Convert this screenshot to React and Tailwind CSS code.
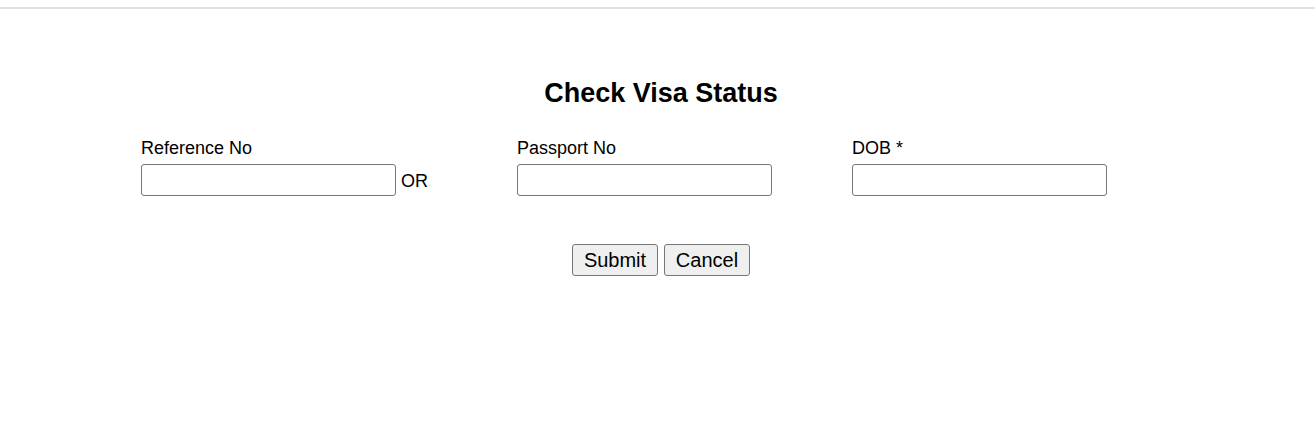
import React from "react";

export default function App() {
  const font = { fontFamily: '"Liberation Sans", Arial, sans-serif' };
  return (
    <div className="w-[1315px] h-[423px] bg-white text-black" style={font}>
      <div className="pt-[7px]">
        <div className="h-[2px] bg-[#e1e1e1]" />
      </div>
      <h2 className="mt-[69px] pl-[7px] text-center text-[27px] leading-[31px] font-bold">
        Check Visa Status
      </h2>
      <div className="mt-[29px] flex pl-[141px]">
        <div className="w-[376px] flex flex-col">
          <label className="text-[18px] leading-[20px]">Reference No</label>
          <div className="mt-[6px] flex items-center gap-[5px]">
            <input
              type="text"
              className="w-[255px] h-[32px] border border-[#767676] rounded-[3px] bg-white px-1 outline-none"
            />
            <span className="text-[18px] leading-[20px] pt-[2px]">OR</span>
          </div>
        </div>
        <div className="w-[335px] flex flex-col">
          <label className="text-[18px] leading-[20px]">Passport No</label>
          <div className="mt-[6px]">
            <input
              type="text"
              className="w-[255px] h-[32px] border border-[#767676] rounded-[3px] bg-white px-1 outline-none"
            />
          </div>
        </div>
        <div className="flex flex-col">
          <label className="text-[18px] leading-[20px]">DOB *</label>
          <div className="mt-[6px]">
            <input
              type="text"
              className="w-[255px] h-[32px] border border-[#767676] rounded-[3px] bg-white px-1 outline-none"
            />
          </div>
        </div>
      </div>
      <div className="mt-[48px] pl-[7px] flex justify-center gap-[6px]">
        <button className="w-[86px] h-[32px] border border-[#767676] rounded-[3px] bg-[#efefef] text-[20px] leading-[24px] text-black">
          Submit
        </button>
        <button className="w-[86px] h-[32px] border border-[#767676] rounded-[3px] bg-[#efefef] text-[20px] leading-[24px] text-black">
          Cancel
        </button>
      </div>
    </div>
  );
}
